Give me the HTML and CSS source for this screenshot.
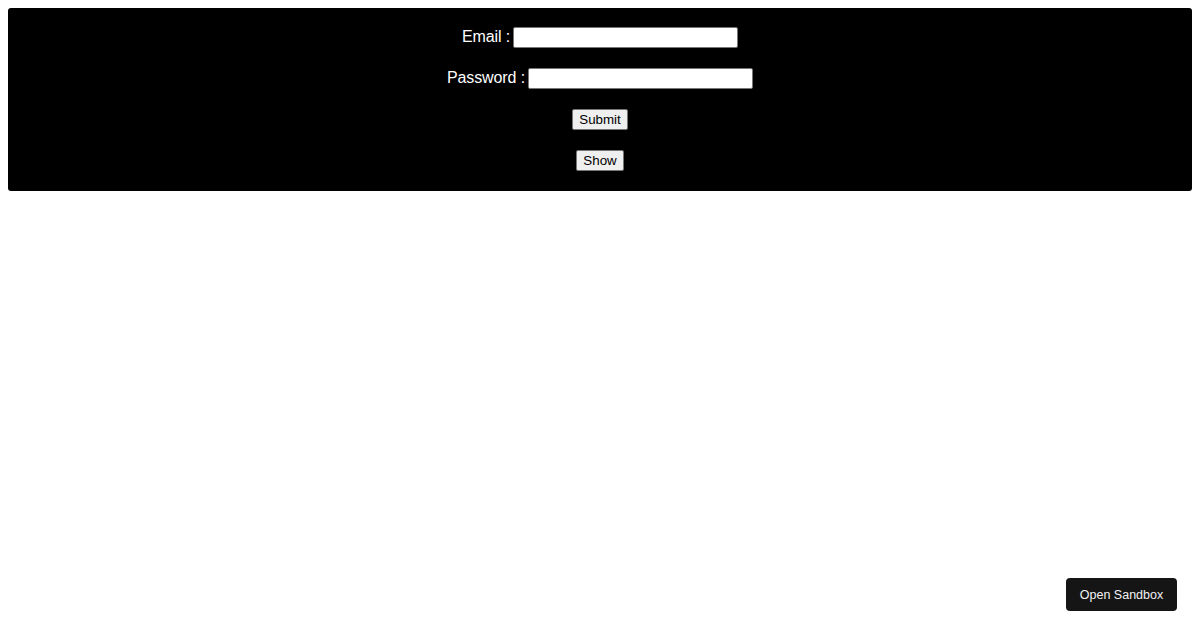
FILE: index.html
```html
<!DOCTYPE html>
<html>
<head>
<meta charset="utf-8">
<link rel="stylesheet" href="styles.css">
</head>
<body>
<form class="panel">
  <div class="row"><label class="label">Email :</label><input class="field" type="text"></div>
  <div class="row"><label class="label">Password :</label><input class="field" type="password"></div>
  <div class="row"><button class="btn" type="button">Submit</button></div>
  <div class="row"><button class="btn" type="button">Show</button></div>
</form>
<a class="sandbox">Open Sandbox</a>
</body>
</html>
```
FILE: styles.css
```css
html, body {
  margin: 0;
  padding: 0;
  background: #fff;
  font-family: "Liberation Sans", Arial, sans-serif;
}
body {
  padding: 8px;
}
.panel {
  background: #000;
  border-radius: 3px;
  display: flex;
  flex-direction: column;
  align-items: center;
  gap: 20px;
  padding: 19px 0 20px;
  margin: 0;
}
.row {
  display: flex;
  align-items: center;
  justify-content: center;
  height: 21px;
}
.label {
  color: #fff;
  font-size: 16px;
  margin-right: 3px;
  line-height: 18px;
  position: relative;
  top: -1px;
  letter-spacing: -0.1px;
}
.field {
  box-sizing: border-box;
  width: 225px;
  height: 21px;
  margin: 0;
  padding: 1px 2px;
  border: 1px solid #767676;
  border-radius: 2px;
  background: #fff;
  font-family: "Liberation Sans", Arial, sans-serif;
  font-size: 13.33px;
}
.btn {
  box-sizing: border-box;
  height: 21px;
  margin: 0;
  padding: 1px 6.5px;
  border: 1px solid #767676;
  border-radius: 2px;
  background: #efefef;
  color: #000;
  font-family: "Liberation Sans", Arial, sans-serif;
  font-size: 13.33px;
  line-height: 15px;
}
.sandbox {
  position: fixed;
  right: 23px;
  bottom: 19px;
  width: 111px;
  height: 33px;
  box-sizing: border-box;
  display: flex;
  align-items: center;
  justify-content: center;
  background: #151515;
  color: #f2f2f2;
  border-radius: 4px;
  font-size: 12.5px;
  font-family: "Liberation Sans", Arial, sans-serif;
}
```
